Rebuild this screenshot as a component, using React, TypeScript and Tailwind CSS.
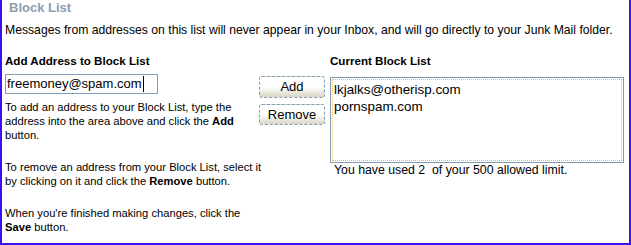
export default function App() {
  return (
    <div className="h-[245px] w-[631px] overflow-hidden bg-white font-['Liberation_Sans',Arial,sans-serif] text-black">
      <div className="flex h-full flex-col border-x-2 border-b-2 border-[#3a10f0] pl-[3px]">
        <h1 className="pl-[4px] text-[13px] font-bold leading-[16px] text-[#8d9eb3]">Block List</h1>
        <p className="mt-[7px] whitespace-nowrap text-[12.2px] leading-[14px]">
          Messages from addresses on this list will never appear in your Inbox, and will go directly to your Junk Mail folder.
        </p>

        <div className="mt-[17px] flex">
          <div className="w-[254px]">
            <h2 className="text-[11.6px] font-bold leading-[14px]">Add Address to Block List</h2>
            <div className="mt-[6px] flex h-[20px] w-[153px] items-center border border-[#7f9db9] px-[1px] text-[13px]">
              freemoney@spam.com
              <span className="ml-[1px] inline-block h-[16px] w-[1px] bg-black" />
            </div>
            <div className="mt-[6px] space-y-[18px] whitespace-nowrap text-[11.2px] leading-[14px]">
              <p>
                To add an address to your Block List, type the
                <br />
                address into the area above and click the <b>Add</b>
                <br />
                button.
              </p>
              <p>
                To remove an address from your Block List, select it
                <br />
                by clicking on it and click the <b>Remove</b> button.
              </p>
              <p>
                When you're finished making changes, click the
                <br />
                <b>Save</b> button.
              </p>
            </div>
          </div>

          <div className="flex w-[71px] flex-col gap-[6px] pt-[22px]">
            <button className="h-[22px] w-[66px] rounded-[3px] border border-dashed border-[#7f9db9] bg-gradient-to-b from-white via-white to-[#d9d6c4] text-[13px] leading-[18px]">
              Add
            </button>
            <button className="h-[21px] w-[66px] rounded-[3px] border border-dashed border-[#7f9db9] bg-gradient-to-b from-white via-white to-[#d9d6c4] text-[13px] leading-[17px]">
              Remove
            </button>
          </div>

          <div className="flex flex-col">
            <h2 className="text-[11.6px] font-bold leading-[14px]">Current Block List</h2>
            <div className="mt-[9px] h-[86px] w-[294px] border border-[#7f9db9] p-[1px]">
              <div className="h-full border border-dotted border-[#f2b84a] pl-[1px] pt-[1px] text-[13.4px] leading-[17px]">
                <div>lkjalks@otherisp.com</div>
                <div>pornspam.com</div>
              </div>
            </div>
            <p className="pl-[4px] text-[12.3px] leading-[15px]">You have used 2&nbsp; of your 500 allowed limit.</p>
          </div>
        </div>
      </div>
    </div>
  );
}
